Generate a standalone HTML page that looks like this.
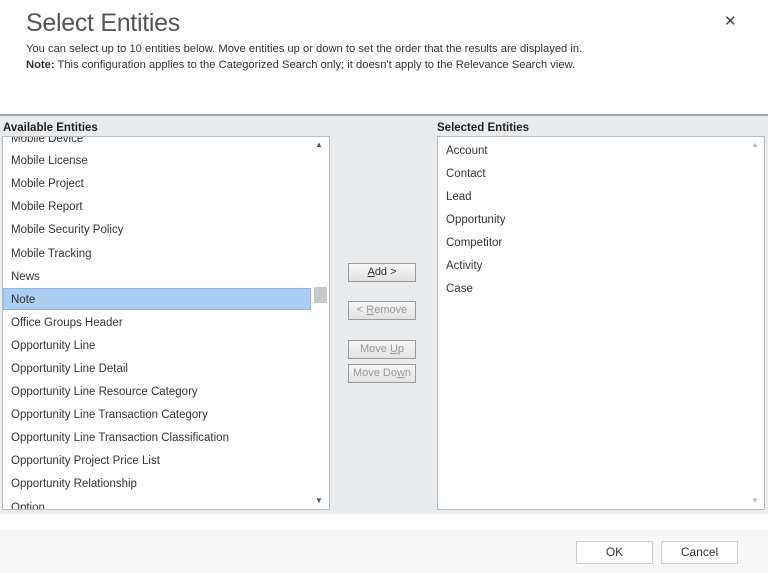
<!DOCTYPE html>
<html><head><style>
*{margin:0;padding:0;box-sizing:border-box}
body{width:768px;height:573px;position:relative;background:#fff;font-family:"Liberation Sans",sans-serif;color:#333;overflow:hidden}
.a{position:absolute}
.t{font-size:25px;color:#555;left:26px;top:9px;font-weight:normal;letter-spacing:-0.3px}
.d{font-size:11.2px;left:26px;color:#333;white-space:nowrap}
.mid{left:0;top:114px;width:768px;height:400px;background:#e9ecef;border-top:2px solid #a6a6a6}
.lbl{font-size:11.5px;font-weight:bold;color:#222}
.box{background:#fff;border:1px solid #b9bcbf;overflow:hidden}
.it{position:absolute;left:8px;font-size:11.5px;color:#333;white-space:nowrap}
.btn{position:absolute;left:348px;width:68px;height:19px;border:1px solid #9a9a9a;background:linear-gradient(#f6f6f6,#e2e2e2);font-size:11px;text-align:center;line-height:17px}
.dis{color:#999}
.fb{position:absolute;top:541px;height:23px;border:1px solid #cfcfcf;background:#fff;font-size:12px;text-align:center;line-height:21px;color:#333}
</style></head><body>
<div class="a t">Select Entities</div>
<div class="a" style="left:724px;top:12px;font-size:15px;color:#444">✕</div>
<div class="a d" style="top:43px">You can select up to 10 entities below. Move entities up or down to set the order that the results are displayed in.</div>
<div class="a d" style="top:59px"><b>Note:</b> This configuration applies to the Categorized Search only; it doesn't apply to the Relevance Search view.</div>
<div class="a mid"></div>
<div class="a lbl" style="left:3px;top:122px">Available Entities</div>
<div class="a lbl" style="left:437px;top:122px">Selected Entities</div>
<div class="a box" style="left:2px;top:136px;width:328px;height:374px">
 <div class="a" style="left:0;top:151px;width:308px;height:22px;background:#abcdef;border:1px solid #8fb8e6"></div>
 <div class="it" style="top:-4px">Mobile Device</div>
 <div class="it" style="top:18px">Mobile License</div>
 <div class="it" style="top:41px">Mobile Project</div>
 <div class="it" style="top:64px">Mobile Report</div>
 <div class="it" style="top:87px">Mobile Security Policy</div>
 <div class="it" style="top:111px">Mobile Tracking</div>
 <div class="it" style="top:134px">News</div>
 <div class="it" style="top:157px">Note</div>
 <div class="it" style="top:180px">Office Groups Header</div>
 <div class="it" style="top:203px">Opportunity Line</div>
 <div class="it" style="top:226px">Opportunity Line Detail</div>
 <div class="it" style="top:249px">Opportunity Line Resource Category</div>
 <div class="it" style="top:272px">Opportunity Line Transaction Category</div>
 <div class="it" style="top:295px">Opportunity Line Transaction Classification</div>
 <div class="it" style="top:318px">Opportunity Project Price List</div>
 <div class="it" style="top:341px">Opportunity Relationship</div>
 <div class="it" style="top:365px">Option</div>
 <div class="a" style="left:310px;top:0;width:16px;height:372px;background:#fff"></div>
 <div class="a" style="left:312px;top:3px;font-size:8px;color:#555">▲</div>
 <div class="a" style="left:312px;top:359px;font-size:8px;color:#555">▼</div>
 <div class="a" style="left:311px;top:150px;width:13px;height:16px;background:#c8c8c8"></div>
</div>
<div class="a box" style="left:437px;top:136px;width:328px;height:374px">
 <div class="it" style="top:8px">Account</div>
 <div class="it" style="top:31px">Contact</div>
 <div class="it" style="top:54px">Lead</div>
 <div class="it" style="top:77px">Opportunity</div>
 <div class="it" style="top:100px">Competitor</div>
 <div class="it" style="top:123px">Activity</div>
 <div class="it" style="top:146px">Case</div>
 <div class="a" style="left:313px;top:3px;font-size:8px;color:#bbb">▲</div>
 <div class="a" style="left:313px;top:359px;font-size:8px;color:#bbb">▼</div>
</div>
<div class="btn" style="top:263px"><u>A</u>dd &gt;</div>
<div class="btn dis" style="top:301px">&lt; <u>R</u>emove</div>
<div class="btn dis" style="top:340px">Move <u>U</u>p</div>
<div class="btn dis" style="top:364px">Move Do<u>w</u>n</div>
<div class="a" style="left:0;top:530px;width:768px;height:43px;background:#f7f7f7"></div>
<div class="fb" style="left:576px;width:77px">OK</div>
<div class="fb" style="left:661px;width:77px">Cancel</div>
</body></html>
